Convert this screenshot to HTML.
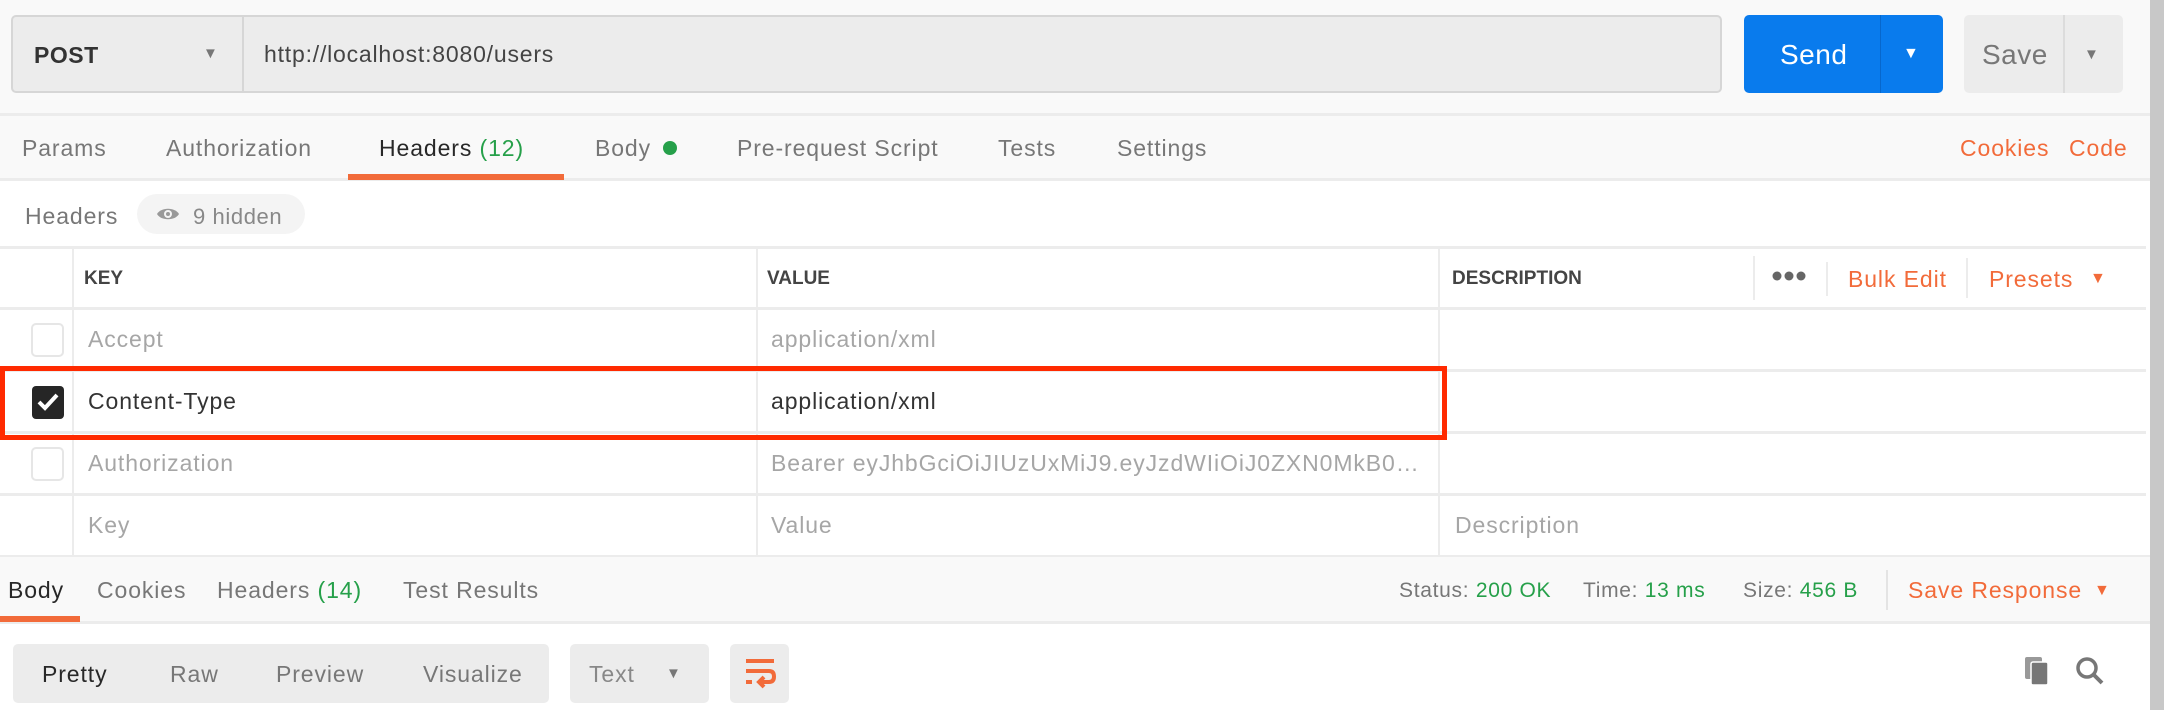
<!DOCTYPE html>
<html><head><meta charset="utf-8"><style>
*{margin:0;padding:0;box-sizing:border-box}
body{width:2164px;height:710px;overflow:hidden;background:#fff;font-family:"Liberation Sans",sans-serif;position:relative;color:#505050}
.a{position:absolute;white-space:nowrap}
.t{font-size:23px;line-height:26px;letter-spacing:0.9px}
.or{color:#f26b3a}.gr{color:#26a04a}
.hl{position:absolute;height:3px;background:#ececec}
.vl{position:absolute;width:2px;background:#ececec}
.cb{position:absolute;width:33px;height:34px;border:2px solid #e6e6e6;border-radius:5px;background:#fff}
.ph{color:#a6a6a6}
</style></head><body>
<div class="a" style="left:0;top:0;width:2150px;height:180px;background:#f9f9f9"></div>
<div class="a" style="left:11px;top:15px;width:1711px;height:78px;background:#ececec;border:2px solid #d6d6d6;border-radius:5px"></div>
<div class="a" style="left:242px;top:17px;width:2px;height:74px;background:#d6d6d6"></div>
<div class="a" style="left:34px;top:42px;font-size:23px;font-weight:bold;color:#333;letter-spacing:0.5px">POST</div>
<div class="a" style="left:203px;top:45px;font-size:15px;color:#777">▼</div>
<div class="a" style="left:264px;top:41px;font-size:23px;color:#444;letter-spacing:0.8px">http://localhost:8080/users</div>
<div class="a" style="left:1744px;top:15px;width:199px;height:78px;background:#097bed;border-radius:5px"></div>
<div class="a" style="left:1880px;top:15px;width:1px;height:78px;background:#0767cc"></div>
<div class="a" style="left:1780px;top:39px;font-size:28px;color:#fff;letter-spacing:0.5px">Send</div>
<div class="a" style="left:1903px;top:45px;font-size:16px;color:#fff">▼</div>
<div class="a" style="left:1964px;top:15px;width:159px;height:78px;background:#ececec;border-radius:5px"></div>
<div class="a" style="left:2063px;top:15px;width:2px;height:78px;background:#dcdcdc"></div>
<div class="a" style="left:1982px;top:39px;font-size:28px;color:#777;letter-spacing:0.5px">Save</div>
<div class="a" style="left:2084px;top:46px;font-size:15px;color:#777">▼</div>
<div class="hl" style="left:0;top:113px;width:2150px"></div>
<div class="hl" style="left:0;top:178px;width:2150px"></div>
<div class="a t" style="left:22px;top:135px;color:#777">Params</div>
<div class="a t" style="left:166px;top:135px;color:#777">Authorization</div>
<div class="a t" style="left:379px;top:135px;color:#282828">Headers <span class="gr">(12)</span></div>
<div class="a" style="left:348px;top:174px;width:216px;height:6px;background:#f26b3a"></div>
<div class="a t" style="left:595px;top:135px;color:#777">Body</div>
<div class="a" style="left:663px;top:141px;width:14px;height:14px;border-radius:50%;background:#26a04a"></div>
<div class="a t" style="left:737px;top:135px;color:#777">Pre-request Script</div>
<div class="a t" style="left:998px;top:135px;color:#777">Tests</div>
<div class="a t" style="left:1117px;top:135px;color:#777">Settings</div>
<div class="a t or" style="left:1960px;top:135px">Cookies</div>
<div class="a t or" style="left:2069px;top:135px">Code</div>
<div class="a t" style="left:25px;top:203px;color:#777">Headers</div>
<div class="a" style="left:137px;top:194px;width:168px;height:40px;border-radius:20px;background:#f4f4f4"></div>
<svg class="a" style="left:156px;top:206px" width="24" height="16" viewBox="0 0 24 16"><path d="M1 8C5 1 19 1 23 8C19 15 5 15 1 8Z" fill="#999"/><circle cx="12" cy="8" r="4" fill="#f4f4f4"/><circle cx="12" cy="8" r="2" fill="#999"/></svg>
<div class="a" style="left:193px;top:204px;font-size:22px;color:#888;letter-spacing:0.6px">9 hidden</div>
<div class="hl" style="left:0;top:246px;width:2146px"></div>
<div class="hl" style="left:0;top:307px;width:2146px"></div>
<div class="hl" style="left:0;top:369px;width:2146px"></div>
<div class="hl" style="left:0;top:431px;width:2146px"></div>
<div class="hl" style="left:0;top:493px;width:2146px"></div>
<div class="hl" style="left:0;top:555px;width:2150px"></div>
<div class="vl" style="left:72px;top:247px;height:309px"></div>
<div class="vl" style="left:756px;top:247px;height:309px"></div>
<div class="vl" style="left:1438px;top:247px;height:309px"></div>
<div class="vl" style="left:1753px;top:256px;height:44px"></div>
<div class="vl" style="left:1826px;top:262px;height:34px"></div>
<div class="vl" style="left:1966px;top:258px;height:40px"></div>
<div class="a" style="left:84px;top:268px;font-size:19px;font-weight:bold;color:#444">KEY</div>
<div class="a" style="left:767px;top:268px;font-size:19px;font-weight:bold;color:#444">VALUE</div>
<div class="a" style="left:1452px;top:268px;font-size:19px;font-weight:bold;color:#444">DESCRIPTION</div>
<svg class="a" style="left:1772px;top:270px" width="34" height="12" viewBox="0 0 34 12"><circle cx="5" cy="6" r="4.5" fill="#666"/><circle cx="17" cy="6" r="4.5" fill="#666"/><circle cx="29" cy="6" r="4.5" fill="#666"/></svg>
<div class="a t or" style="left:1848px;top:266px">Bulk Edit</div>
<div class="a t or" style="left:1989px;top:266px">Presets</div>
<div class="a or" style="left:2090px;top:270px;font-size:16px">▼</div>
<div class="cb" style="left:31px;top:323px"></div>
<div class="a t ph" style="left:88px;top:326px">Accept</div>
<div class="a t ph" style="left:771px;top:326px">application/xml</div>
<div class="a" style="left:32px;top:386px;width:32px;height:33px;border-radius:4px;background:#262626"></div>
<svg class="a" style="left:36px;top:391px" width="24" height="22" viewBox="0 0 24 22"><path d="M3 11L9 17L21 4" fill="none" stroke="#fff" stroke-width="4"/></svg>
<div class="a t" style="left:88px;top:388px;color:#333">Content-Type</div>
<div class="a t" style="left:771px;top:388px;color:#333">application/xml</div>
<div class="cb" style="left:31px;top:447px"></div>
<div class="a t ph" style="left:88px;top:450px">Authorization</div>
<div class="a t ph" style="left:771px;top:450px;width:660px;overflow:hidden;text-overflow:ellipsis">Bearer eyJhbGciOiJIUzUxMiJ9.eyJzdWIiOiJ0ZXN0MkB0ZXN0LmNvbSJ9</div>
<div class="a t ph" style="left:88px;top:512px">Key</div>
<div class="a t ph" style="left:771px;top:512px">Value</div>
<div class="a t ph" style="left:1455px;top:512px">Description</div>
<div class="a" style="left:0;top:366px;width:1447px;height:74px;border:5px solid #ff2a00"></div>
<div class="a" style="left:0;top:557px;width:2150px;height:65px;background:#f9f9f9"></div>
<div class="hl" style="left:0;top:621px;width:2150px"></div>
<div class="a t" style="left:8px;top:577px;color:#282828">Body</div>
<div class="a" style="left:0;top:616px;width:80px;height:6px;background:#f26b3a"></div>
<div class="a t" style="left:97px;top:577px;color:#777">Cookies</div>
<div class="a t" style="left:217px;top:577px;color:#777">Headers <span class="gr">(14)</span></div>
<div class="a t" style="left:403px;top:577px;color:#777">Test Results</div>
<div class="a" style="left:1399px;top:579px;font-size:21px;color:#777;letter-spacing:0.7px">Status: <span class="gr">200 OK</span></div>
<div class="a" style="left:1583px;top:579px;font-size:21px;color:#777;letter-spacing:0.7px">Time: <span class="gr">13 ms</span></div>
<div class="a" style="left:1743px;top:579px;font-size:21px;color:#777;letter-spacing:0.7px">Size: <span class="gr">456 B</span></div>
<div class="a" style="left:1886px;top:570px;width:2px;height:40px;background:#e4e4e4"></div>
<div class="a t or" style="left:1908px;top:577px">Save Response</div>
<div class="a or" style="left:2094px;top:582px;font-size:16px">▼</div>
<div class="a" style="left:13px;top:644px;width:536px;height:59px;background:#ececec;border-radius:5px"></div>
<div class="a t" style="left:42px;top:661px;color:#282828">Pretty</div>
<div class="a t" style="left:170px;top:661px;color:#777">Raw</div>
<div class="a t" style="left:276px;top:661px;color:#777">Preview</div>
<div class="a t" style="left:423px;top:661px;color:#777">Visualize</div>
<div class="a" style="left:570px;top:644px;width:139px;height:59px;background:#ececec;border-radius:5px"></div>
<div class="a t" style="left:589px;top:661px;color:#888">Text</div>
<div class="a" style="left:666px;top:665px;font-size:15px;color:#777">▼</div>
<div class="a" style="left:730px;top:644px;width:59px;height:59px;background:#ececec;border-radius:5px"></div>
<svg class="a" style="left:743px;top:658px" width="34" height="32" viewBox="0 0 34 32"><path d="M3 3H31M3 13H26Q31 13 31 18.5Q31 24 26 24H17M21 19L16 24L21 29M3 24H9" fill="none" stroke="#f26b3a" stroke-width="4"/></svg>
<svg class="a" style="left:2024px;top:656px" width="28" height="30" viewBox="0 0 28 30"><rect x="1" y="1" width="17" height="22" rx="2" fill="#999"/><rect x="7" y="6" width="17" height="23" rx="2" fill="#777" stroke="#fff" stroke-width="1.5"/></svg>
<svg class="a" style="left:2075px;top:656px" width="30" height="30" viewBox="0 0 30 30"><circle cx="12" cy="12" r="9" fill="none" stroke="#777" stroke-width="3.5"/><path d="M18 18L27 27" stroke="#777" stroke-width="4"/></svg>
<div class="a" style="left:2150px;top:0;width:14px;height:710px;background:#c8c8c8"></div>
</body></html>
